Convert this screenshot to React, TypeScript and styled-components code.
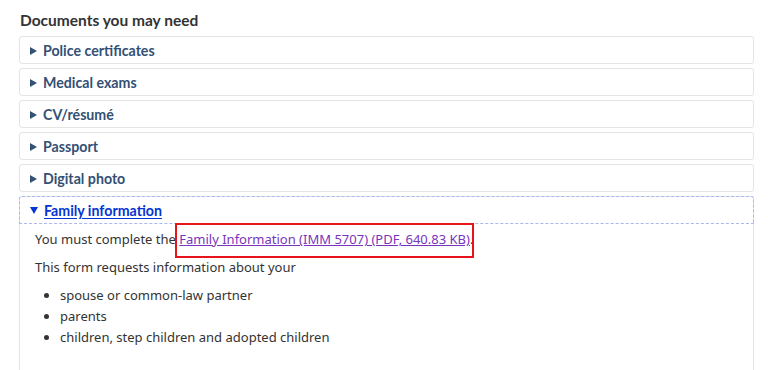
import React from 'react';
import styled, { createGlobalStyle } from 'styled-components';

const GlobalStyle = createGlobalStyle`
  body {
    margin: 0;
    background: #fff;
    font-family: "Noto Sans", sans-serif;
    color: #333;
  }
`;

const Page = styled.div`
  padding: 10px 14px 0 19px;
`;

const Heading = styled.h2`
  font-family: Lato, sans-serif;
  font-weight: 700;
  font-size: 15.5px;
  line-height: 21px;
  color: #333;
  margin: 0 0 5px 1px;
`;

const List = styled.div`
  display: flex;
  flex-direction: column;
  gap: 4px;
`;

const Box = styled.div<{ $open?: boolean }>`
  border: 1px solid #e4e4e4;
  border-radius: 3px;
  ${(p) => p.$open && 'border-bottom: none; padding-bottom: 40px;'}
`;

const Summary = styled.div<{ $open?: boolean }>`
  display: flex;
  align-items: center;
  gap: 6px;
  height: 26px;
  padding-left: 10px;
  font-family: Lato, sans-serif;
  font-weight: 700;
  font-size: 14.2px;
  color: ${(p) => (p.$open ? '#0535d2' : '#335075')};
  ${(p) =>
    p.$open &&
    `margin: -1px -1px 0; border: 1px dashed #a9b8ef; border-radius: 3px 3px 0 0;`}
`;

// small CSS triangle, pointing right when closed and down when open
const Arrow = styled.span<{ $open?: boolean }>`
  width: 0;
  height: 0;
  margin-top: 1px;
  ${(p) =>
    p.$open
      ? `border-top: 7px solid currentColor; border-left: 4px solid transparent; border-right: 4px solid transparent;`
      : `border-left: 7px solid currentColor; border-top: 4px solid transparent; border-bottom: 4px solid transparent;`}
`;

const Label = styled.span<{ $open?: boolean }>`
  text-decoration: ${(p) => (p.$open ? 'underline' : 'none')};
  text-underline-offset: 2px;
`;

const Content = styled.div`
  padding: 5px 15px 0;
  font-size: 13px;
  line-height: 21px;
`;

const Para = styled.p`
  margin: 0 0 7px;
`;

const Marked = styled.span`
  position: relative;
  &::after {
    content: '';
    position: absolute;
    left: -4px;
    right: -1px;
    top: -7px;
    bottom: -10px;
    border: 2px solid #e8141c;
  }
`;

const Link = styled.a`
  color: #7834bc;
  text-decoration: underline;
`;

const Bullets = styled.ul`
  margin: 3px 0 0;
  padding-left: 25px;
`;

const items = ['Police certificates', 'Medical exams', 'CV/résumé', 'Passport', 'Digital photo'];

export default function App() {
  return (
    <Page>
      <GlobalStyle />
      <Heading>Documents you may need</Heading>
      <List>
        {items.map((t) => (
          <Box key={t}>
            <Summary>
              <Arrow />
              <Label>{t}</Label>
            </Summary>
          </Box>
        ))}
        <Box $open>
          <Summary $open>
            <Arrow $open />
            <Label $open>Family information</Label>
          </Summary>
          <Content>
            <Para>
              You must complete the{' '}
              <Marked>
                <Link href="#">Family Information (IMM 5707) (PDF, 640.83 KB)</Link>.
              </Marked>
            </Para>
            <Para>This form requests information about your</Para>
            <Bullets>
              <li>spouse or common-law partner</li>
              <li>parents</li>
              <li>children, step children and adopted children</li>
            </Bullets>
          </Content>
        </Box>
      </List>
    </Page>
  );
}
